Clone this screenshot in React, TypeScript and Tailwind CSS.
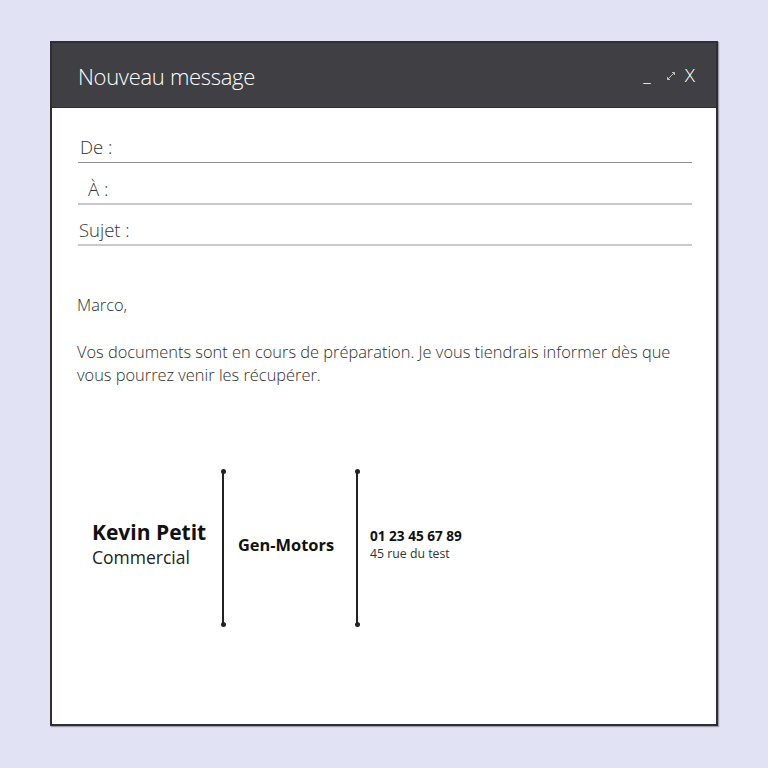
import React from "react";

function Divider() {
  return (
    <div className="flex flex-col items-center w-[6px] h-[158px]">
      <div className="w-[5px] h-[5px] rounded-full bg-[#222]" />
      <div className="w-[2px] flex-1 bg-[#222] -my-[1px]" />
      <div className="w-[5px] h-[5px] rounded-full bg-[#222]" />
    </div>
  );
}

export default function App() {
  return (
    <main
      className="min-h-screen w-full bg-[#e1e2f4] pt-[41px] pl-[50px]"
      style={{ fontFamily: '"Open Sans", "Noto Sans", sans-serif' }}
    >
      <div className="w-[668px] h-[685px] bg-white border-2 border-[#2e2e33] shadow-[1px_1px_1px_rgba(0,0,0,0.3)] flex flex-col">
        {/* Header */}
        <div className="h-[65px] bg-[#3f3f44] flex items-center justify-between pl-[26px] pr-[21px] border-b border-[#2e2e33]">
          <h1 className="text-[22px] font-light text-white tracking-[-0.3px] mt-[2px]">Nouveau message</h1>
          <div className="flex items-end text-white">
            <span className="text-[17px] leading-none mb-[1px] text-[#e0e0e4]">_</span>
            <svg width="12" height="12" viewBox="0 0 12 12" className="mb-[3px] ml-[14px]" fill="none" stroke="#bdbdc3" strokeWidth="1">
              <path d="M2.5 9.5 L9.5 2.5 M7 2.5 H9.5 V5 M2.5 7 V9.5 H5" />
            </svg>
            <span className="text-[19px] leading-none font-light ml-[8px]">X</span>
          </div>
        </div>

        {/* Fields */}
        <div className="pl-[26px] pr-[24px] pt-[13px]">
          <div className="h-[42px] flex items-end border-b border-[#8e8e96]">
            <span className="pl-[2px] pb-[2px] text-[18.5px] leading-[26px] font-light text-[#333]">De :</span>
          </div>
          <div className="h-[42px] flex items-end border-b-2 border-[#c8c8ce]">
            <span className="pl-[10px] pb-[1px] text-[18.5px] leading-[26px] font-light text-[#333]">À :</span>
          </div>
          <div className="h-[41px] flex items-end border-b-2 border-[#c8c8ce]">
            <span className="pl-[1px] pb-[1px] text-[18.5px] leading-[26px] font-light text-[#333]">Sujet :</span>
          </div>
        </div>

        {/* Body */}
        <div className="pl-[25px] pr-[20px] mt-[47px] text-[16.4px] leading-[23px] font-light text-[#2e2e2e]">
          <p>Marco,</p>
          <p className="mt-[24px]">
            Vos documents sont en cours de préparation. Je vous tiendrais informer dès que
            <br />
            vous pourrez venir les récupérer.
          </p>
        </div>

        {/* Signature */}
        <div className="flex items-center pl-[40px] mt-[83px]">
          <div className="w-[128px] text-[#111] -mt-[8px]">
            <div className="text-[21px] font-bold leading-[27px]">Kevin Petit</div>
            <div className="text-[17.5px] leading-[23px] text-[#222]">Commercial</div>
          </div>
          <Divider />
          <div className="w-[128px] pl-[12px] text-[16.4px] font-bold text-[#111] -mt-[5px]">Gen-Motors</div>
          <Divider />
          <div className="pl-[10px] text-[#111] -mt-[8px]">
            <div className="text-[13.6px] font-bold leading-[19px]">01 23 45 67 89</div>
            <div className="text-[12.3px] leading-[18px] text-[#333]">45 rue du test</div>
          </div>
        </div>
      </div>
    </main>
  );
}
